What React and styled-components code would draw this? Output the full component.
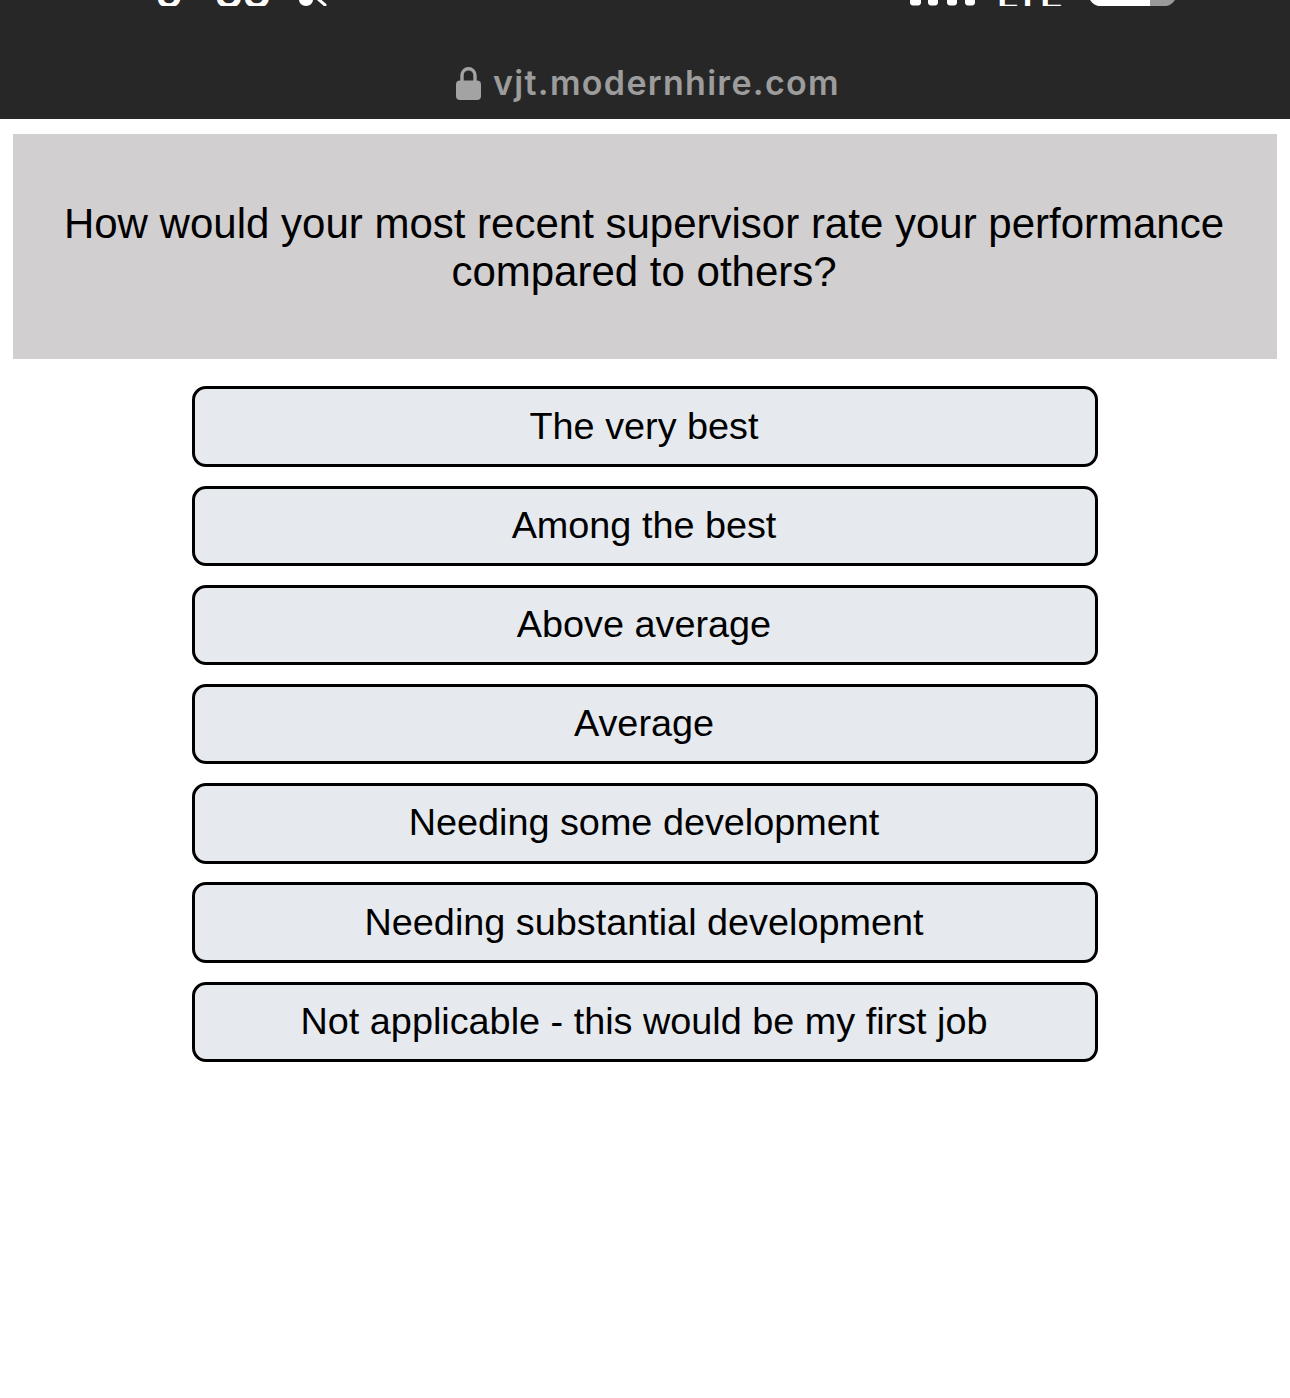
import React from "react";
import styled, { createGlobalStyle } from "styled-components";

const Global = createGlobalStyle`
  html, body { margin: 0; padding: 0; background: #fff; }
  body { font-family: "Liberation Sans", Arial, sans-serif; }
`;

const Page = styled.div`
  width: 1290px;
  height: 1398px;
  overflow: hidden;
  background: #fff;
`;

const Chrome = styled.header`
  height: 119px;
  background: #272727;
  display: flex;
  flex-direction: column;
`;

const StatusRow = styled.div`
  height: 6px;
  overflow: hidden;
  display: flex;
  justify-content: space-between;
  align-items: flex-end;
  padding: 0 115px 0 155px;
  color: #fff;
  font-family: Inter, sans-serif;
  font-weight: 600;
`;

const StatusGroup = styled.div`
  display: flex;
  align-items: flex-end;
  gap: ${(p) => p.$gap}px;
`;

const ClippedText = styled.span`
  font-size: ${(p) => p.$size}px;
  line-height: ${(p) => p.$size}px;
  height: ${(p) => p.$size}px;
  margin-bottom: -8px;
  margin-left: ${(p) => p.$shift || 0}px;
  white-space: nowrap;
`;

const TimeColon = styled.span`
  display: inline-block;
  margin: 0 9px;
  transform: translateY(-8px);
`;

const StatusIcon = styled.svg`
  display: block;
  flex: none;
`;

const AddressRow = styled.div`
  margin-top: 60px;
  height: 34px;
  padding-left: 6px;
  display: flex;
  justify-content: center;
  align-items: center;
  gap: 12px;
`;

const Domain = styled.span`
  font-family: Inter, sans-serif;
  font-weight: 600;
  font-size: 34px;
  letter-spacing: 1.3px;
  line-height: 34px;
  color: #9c9c9c;
  white-space: nowrap;
`;

const Main = styled.main`
  padding: 15px 13px 0;
`;

const Question = styled.h1`
  margin: 0;
  height: 225px;
  box-sizing: border-box;
  display: flex;
  align-items: center;
  justify-content: center;
  text-align: center;
  background: #d1cfd0;
  color: #000;
  font-weight: 400;
  font-size: 42px;
  line-height: 48px;
  padding: 2px 32px 0 30px;
`;

const Options = styled.div`
  width: 906px;
  margin: 27.45px auto 0;
  display: flex;
  flex-direction: column;
  gap: 18.92px;
`;

const Option = styled.button`
  height: 80.3px;
  box-sizing: border-box;
  width: 100%;
  padding: 0 2px 2px 0;
  border: 3px solid #000;
  border-radius: 14px;
  background: #e6e9ee;
  color: #000;
  font-family: "Liberation Sans", Arial, sans-serif;
  font-size: 37.8px;
  line-height: 44px;
  text-align: center;
`;

const options = [
  "The very best",
  "Among the best",
  "Above average",
  "Average",
  "Needing some development",
  "Needing substantial development",
  "Not applicable - this would be my first job",
];

export default function App() {
  return (
    <Page>
      <Global />
      <Chrome>
        <StatusRow>
          <StatusGroup $gap={22}>
            <ClippedText $size={44}>5<TimeColon>:</TimeColon>33</ClippedText>
            <StatusIcon width="36" height="6" viewBox="0 0 36 6">
              <path d="M6 0 H20 A7 6 0 0 1 6 0 Z" fill="#fff" />
              <path d="M24 -2 L32 5" stroke="#fff" strokeWidth="3" strokeLinecap="round" />
            </StatusIcon>
          </StatusGroup>
          <StatusGroup $gap={27}>
            <StatusIcon width="66" height="6" viewBox="0 0 66 6">
              <path d="M0 0 H11 V2 A3 3 0 0 1 8 5.5 H3 A3 3 0 0 1 0 2 Z" fill="#fff" />
              <path d="M18 0 H28 V2 A3 3 0 0 1 25 5.5 H21 A3 3 0 0 1 18 2 Z" fill="#fff" />
              <path d="M37 0 H47 V2 A3 3 0 0 1 44 5.5 H40 A3 3 0 0 1 37 2 Z" fill="#fff" />
              <path d="M55 0 H65 V2 A3 3 0 0 1 62 5.5 H58 A3 3 0 0 1 55 2 Z" fill="#fff" />
            </StatusIcon>
            <ClippedText $size={38} $shift={-6}>LTE</ClippedText>
            <StatusIcon width="85" height="6" viewBox="0 0 85 6">
              <path d="M0 0 H60 V6 H14 A14 14 0 0 1 0 0 Z" fill="#fff" />
              <path d="M60 0 H85 A14 14 0 0 1 71 6 H60 Z" fill="#9a9a9a" />
            </StatusIcon>
          </StatusGroup>
        </StatusRow>
        <AddressRow>
          <StatusIcon width="25" height="33" viewBox="0 0 25 33">
            <path d="M6 15 V8.2 a6.5 6.5 0 0 1 13 0 V15" fill="none" stroke="#a3a3a3" strokeWidth="3.4" />
            <rect x="0" y="13.5" width="25" height="19.5" rx="4" fill="#a3a3a3" />
          </StatusIcon>
          <Domain>vjt.modernhire.com</Domain>
        </AddressRow>
      </Chrome>
      <Main>
        <Question>How would your most recent supervisor rate your performance compared to others?</Question>
        <Options>
          {options.map((o) => (
            <Option key={o}>{o}</Option>
          ))}
        </Options>
      </Main>
    </Page>
  );
}
